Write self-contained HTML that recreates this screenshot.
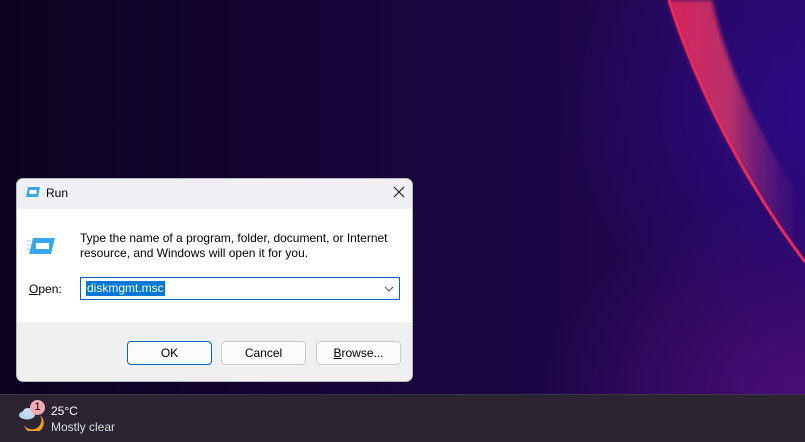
<!DOCTYPE html>
<html><head><meta charset="utf-8"><style>
*{margin:0;padding:0;box-sizing:border-box}
body{width:805px;height:442px;overflow:hidden;position:relative;font-family:"Liberation Sans",sans-serif;background:#14062e}
#bg{position:absolute;left:0;top:0;width:805px;height:394px;background:radial-gradient(ellipse 260px 240px at 820px 110px,#2c0a88 0%,rgba(40,10,110,0) 100%),radial-gradient(ellipse 260px 200px at 805px 394px,#4a0c78 0%,rgba(60,10,110,0) 100%),linear-gradient(90deg,#0c0320 0%,#1a0642 60%,#280858 100%)}
#tb{position:absolute;left:0;top:394px;width:805px;height:48px;background:#2a2433;border-top:1px solid #3a3444}
#dlg{position:absolute;left:16px;top:178px;width:397px;height:204px;background:#f0f0f0;border:1px solid #b8b8b8;border-radius:7px;overflow:hidden;font-size:12px;color:#000}
.btn{position:absolute;top:162px;width:85px;height:24px;background:#fbfbfb;border:1px solid #ccc;border-radius:4px;text-align:center;line-height:22px;font-size:12px}
</style></head><body>
<div id="bg"></div>
<svg style="position:absolute;left:0;top:0" width="805" height="394">
<defs><linearGradient id="g" x1="0" y1="0" x2="1" y2="0"><stop offset="0" stop-color="#d8245c"/><stop offset="0.45" stop-color="#b8306a"/><stop offset="1" stop-color="#5a1a90" stop-opacity="0"/></linearGradient>
<filter id="b"><feGaussianBlur stdDeviation="2"/></filter></defs>
<path d="M668 0 C700 100 750 190 805 262 L805 205 C765 145 728 75 712 0 Z" fill="url(#g)" filter="url(#b)"/>
<path d="M669 0 C701 100 751 190 805 262" stroke="#e82a5a" stroke-width="3" fill="none"/>
</svg>
<div id="dlg">
 <div style="position:absolute;left:0;top:0;width:397px;height:30px;background:#f0eff4"></div>
 <svg style="position:absolute;left:8px;top:7px" width="16" height="12"><path d="M3 1H15L13 11H1Z" fill="#3aa8e8"/><rect x="4.5" y="4" width="7" height="4" fill="#fff"/></svg>
 <div style="position:absolute;left:29px;top:7px;font-size:12px">Run</div>
 <svg style="position:absolute;left:376px;top:7px" width="12" height="12"><path d="M1 1L11 11M11 1L1 11" stroke="#222" stroke-width="1.2"/></svg>
 <div style="position:absolute;left:0;top:30px;width:397px;height:113px;background:#fff"></div>
 <svg style="position:absolute;left:10px;top:57px" width="30" height="20"><path d="M6 2H28L24 18H2Z" fill="#3aa8e8"/><rect x="9" y="7" width="13" height="6" fill="#fff"/><path d="M0 5H4M0 9H3M0 13H3" stroke="#9bd2f3" stroke-width="1"/></svg>
 <div style="position:absolute;left:63px;top:52px;line-height:15px">Type the name of a program, folder, document, or Internet<br>resource, and Windows will open it for you.</div>
 <div style="position:absolute;left:12px;top:103px"><u>O</u>pen:</div>
 <div style="position:absolute;left:63px;top:98px;width:320px;height:23px;border:1px solid #0067c0;background:#fff">
  <span style="position:absolute;left:5px;top:3px;background:#0078d7;color:#fff;padding:0 1px;line-height:15px">diskmgmt.msc</span>
  <svg style="position:absolute;right:5px;top:8px" width="10" height="6"><path d="M1 1L5 5L9 1" stroke="#555" fill="none"/></svg>
 </div>
 <div class="btn" style="left:110px;border-color:#0067c0">OK</div>
 <div class="btn" style="left:204px">Cancel</div>
 <div class="btn" style="left:299px"><u>B</u>rowse...</div>
</div>
<div id="tb">
 <svg style="position:absolute;left:18px;top:8px" width="26" height="28"><path d="M22 12 A10 10 0 1 1 6 22 A9 9 0 0 0 22 12Z" fill="#f2a020"/><ellipse cx="9" cy="12" rx="8" ry="4.5" fill="#b8d4ee"/><ellipse cx="10" cy="9" rx="5" ry="4" fill="#c8ddf2"/></svg>
 <div style="position:absolute;left:30px;top:5px;width:15px;height:15px;border-radius:50%;background:#f6a8b4;color:#000;font-size:11px;text-align:center;line-height:15px">1</div>
 <div style="position:absolute;left:51px;top:9px;color:#fff;font-size:12px">25°C</div>
 <div style="position:absolute;left:51px;top:25px;color:#ddd;font-size:12px">Mostly clear</div>
</div>
</body></html>
